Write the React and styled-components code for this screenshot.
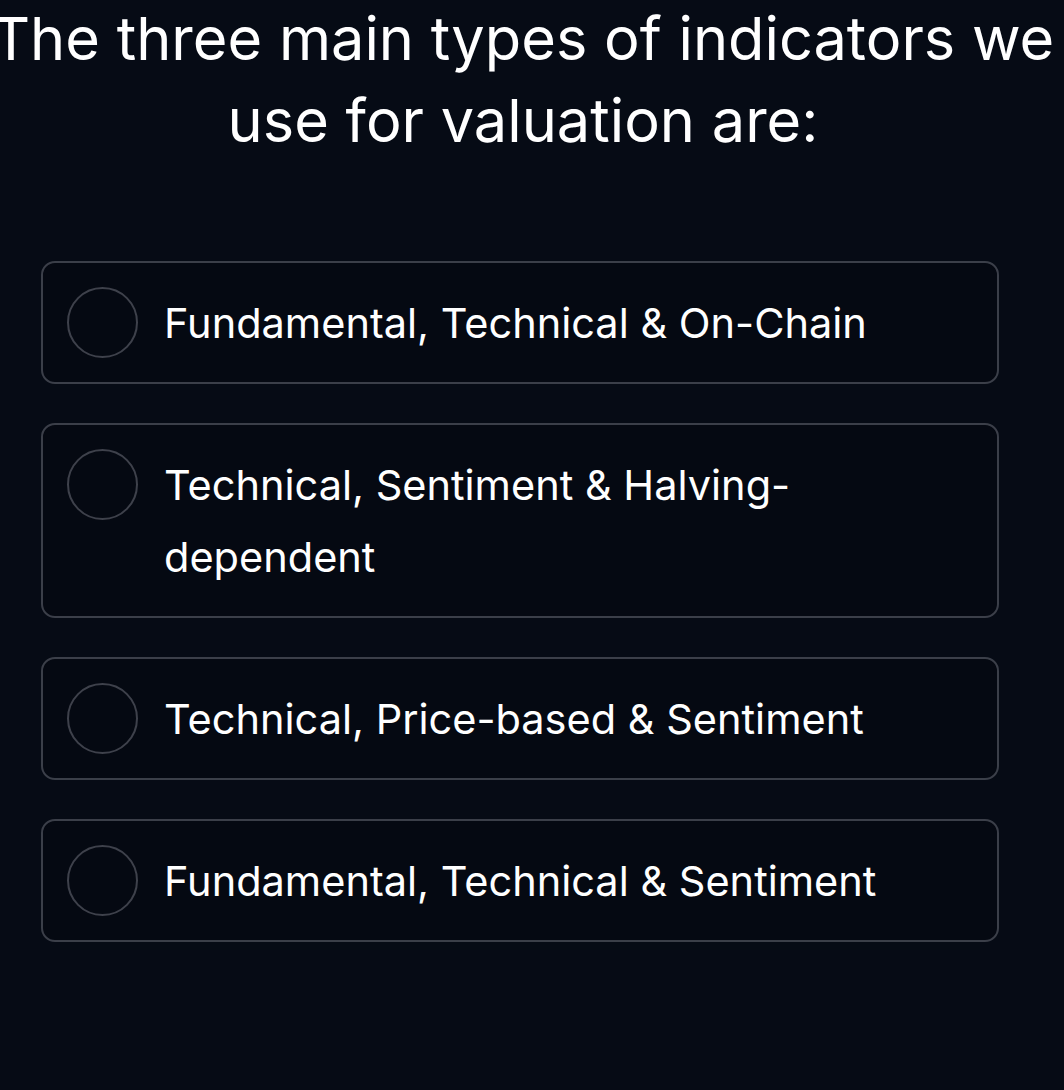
import styled, { createGlobalStyle } from 'styled-components'

const GlobalStyle = createGlobalStyle`
    html, body {
        margin: 0;
        padding: 0;
        background: #060b15;
    }
    body {
        font-family: Inter, "Noto Sans", sans-serif;
        color: #ffffff;
        overflow: hidden;
    }
`

const Page = styled.div`
    display: flex;
    flex-direction: column;
    width: 1040px;
    min-height: 1090px;
`
const Title = styled.h1`
    margin: -3px -27px 100px -21px;
    font-size: 59.5px;
    font-weight: 400;
    line-height: 82px;
    text-align: center;
`
const OptionList = styled.div`
    display: flex;
    flex-direction: column;
    gap: 39px;
    margin-left: 41px;
    width: 958px;
`
const Option = styled.label`
    display: flex;
    align-items: flex-start;
    gap: 26px;
    padding: 23.5px 24px;
    border: 2px solid #3b3f49;
    border-radius: 14px;
    background: #050912;
    cursor: pointer;
`
const Radio = styled.span`
    flex: none;
    width: 71px;
    height: 71px;
    box-sizing: border-box;
    border: 2.5px solid #3e414b;
    border-radius: 50%;
`
const OptionText = styled.span`
    font-size: 41.5px;
    line-height: 72px;
    max-width: 780px;
`

const options = [
    'Fundamental, Technical & On-Chain',
    'Technical, Sentiment & Halving-dependent',
    'Technical, Price-based & Sentiment',
    'Fundamental, Technical & Sentiment',
]

const App = () => {
    return (
        <Page>
            <GlobalStyle />
            <Title>The three main types of indicators we use for valuation are:</Title>
            <OptionList>
                {options.map((o) => (
                    <Option key={o}>
                        <Radio />
                        <OptionText>{o}</OptionText>
                    </Option>
                ))}
            </OptionList>
        </Page>
    )
}

export default App
